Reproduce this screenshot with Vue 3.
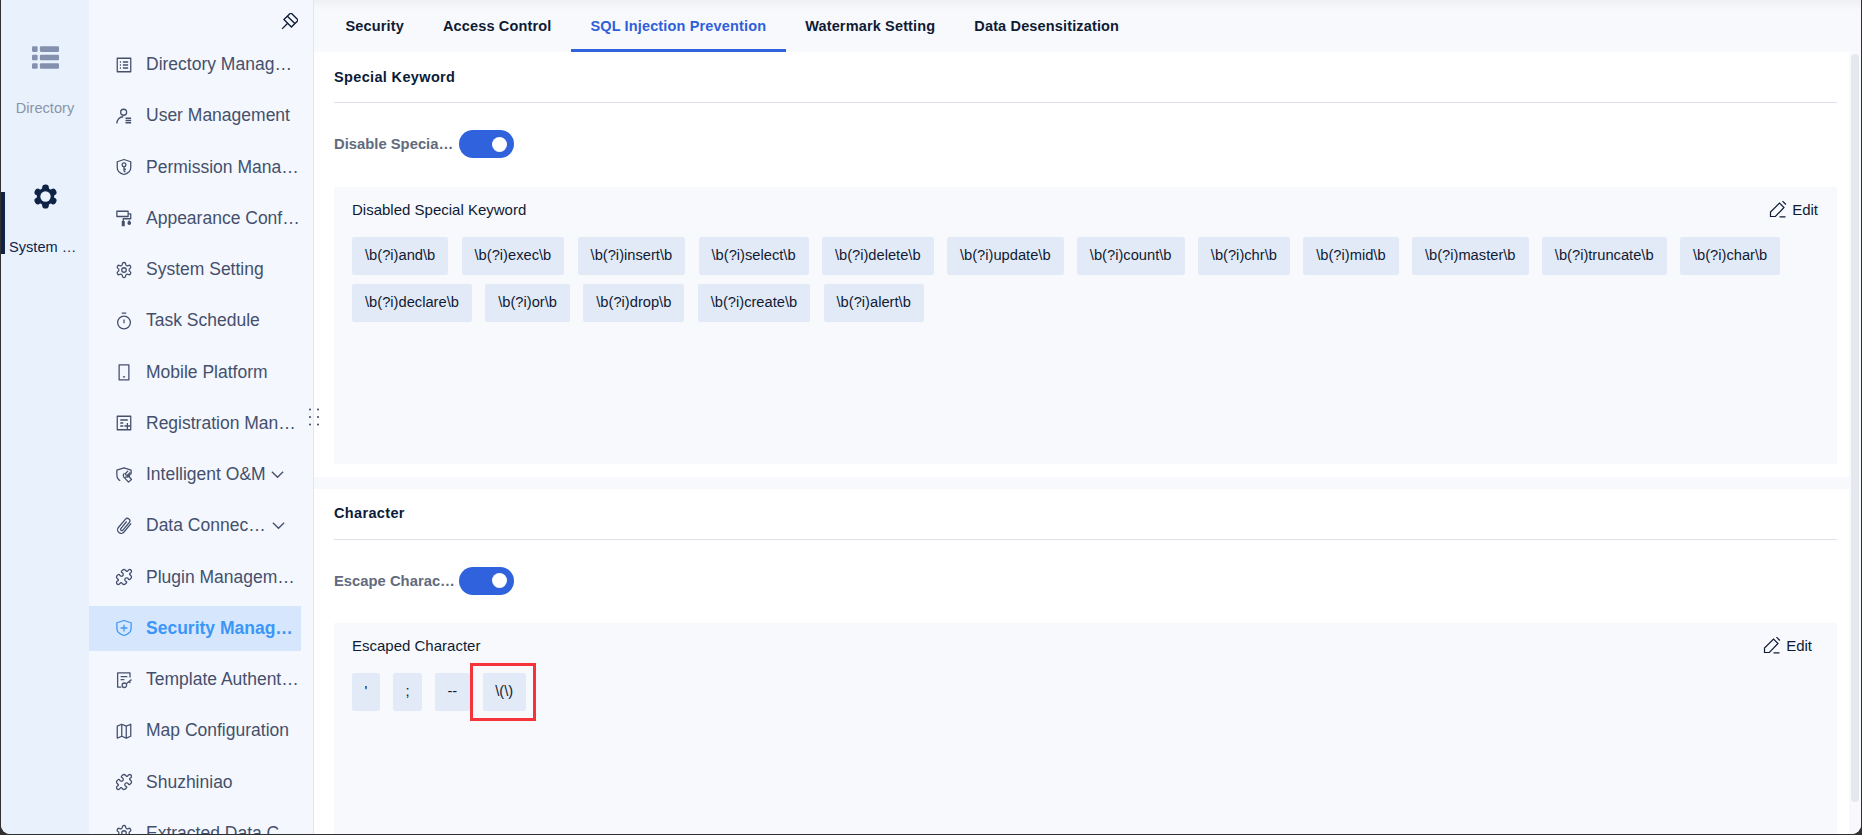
<script setup>
// Icons are stroke paths on a 24 box
const gear = "M12.22 2h-.44a2 2 0 0 0-2 2v.18a2 2 0 0 1-1 1.73l-.43.25a2 2 0 0 1-2 0l-.15-.08a2 2 0 0 0-2.73.73l-.22.38a2 2 0 0 0 .73 2.73l.15.1a2 2 0 0 1 1 1.72v.51a2 2 0 0 1-1 1.74l-.15.09a2 2 0 0 0-.73 2.73l.22.38a2 2 0 0 0 2.73.73l.15-.08a2 2 0 0 1 2 0l.43.25a2 2 0 0 1 1 1.73V20a2 2 0 0 0 2 2h.44a2 2 0 0 0 2-2v-.18a2 2 0 0 1 1-1.73l.43-.25a2 2 0 0 1 2 0l.15.08a2 2 0 0 0 2.73-.73l.22-.39a2 2 0 0 0-.73-2.73l-.15-.08a2 2 0 0 1-1-1.74v-.5a2 2 0 0 1 1-1.74l.15-.09a2 2 0 0 0 .73-2.73l-.22-.38a2 2 0 0 0-2.73-.73l-.15.08a2 2 0 0 1-2 0l-.43-.25a2 2 0 0 1-1-1.73V4a2 2 0 0 0-2-2z";
const ring = "M9 12a3 3 0 1 0 6 0a3 3 0 1 0-6 0";
const puzzle = "M19.44 7.85c-.05.32.06.65.29.88l1.57 1.57c.47.47.7 1.09.7 1.7s-.23 1.23-.7 1.7l-1.61 1.61a.98.98 0 0 1-.84.28c-.47-.07-.8-.48-.97-.93a2.5 2.5 0 1 0-3.21 3.22c.44.16.85.5.92.96a.98.98 0 0 1-.27.84l-1.61 1.61a2.4 2.4 0 0 1-3.41 0l-1.57-1.57a1.03 1.03 0 0 0-.87-.29c-.5.07-.84.5-1.02.97a2.5 2.5 0 1 1-3.24-3.24c.47-.18.9-.53.97-1.02a1.03 1.03 0 0 0-.29-.87l-1.57-1.57a2.4 2.4 0 0 1 0-3.41L4.23 8.77c.24-.24.58-.35.92-.3.51.07.87.53 1.07 1.01a2.5 2.5 0 1 0 3.26-3.26c-.48-.2-.93-.56-1.01-1.07-.05-.34.06-.68.3-.92l1.53-1.53a2.4 2.4 0 0 1 3.41 0l1.57 1.57c.23.23.55.34.87.29.5-.07.84-.5 1.02-.97a2.5 2.5 0 1 1 3.24 3.24c-.47.18-.9.53-.97 1.02z";

const menu = [
  { label: "Directory Management", paths: ["M3 3h18v18H3z", "M6.5 8h1.5M10.5 8h7M6.5 12h1.5M10.5 12h7M6.5 16h1.5M10.5 16h7"] },
  { label: "User Management", paths: ["M7.5 7a4 4 0 1 0 8 0a4 4 0 1 0-8 0", "M2.5 22c0-5 3.5-9 8.5-9", "M14 15h7.5M14 18h7.5M14 21h7.5"] },
  { label: "Permission Management", paths: ["M12 2l9 3v8c0 4.4-4 7.6-9 9c-5-1.4-9-4.6-9-9V5z", "M9.5 9a2.5 2.5 0 1 0 5 0a2.5 2.5 0 1 0-5 0", "M12 11.5v6.5M12 15h2.5M12 18h2"] },
  { label: "Appearance Configuration", paths: ["M2.5 3h15v7h-15z", "M17.5 6.5h3.5v6.5h-10v3"], fills: ["M9 16h4v7H9z", "M19 14.5c1.5 2 2.5 3 2.5 4.3a2.5 2.5 0 1 1-5 0c0-1.3 1-2.3 2.5-4.3z"] },
  { label: "System Setting", paths: [gear, ring] },
  { label: "Task Schedule", paths: ["M9 1.5h6", "M12 5.5a8.5 8.5 0 1 0 0 17a8.5 8.5 0 1 0 0-17z", "M12 10v5"] },
  { label: "Mobile Platform", paths: ["M5.5 2.5h13v20h-13z", "M10.5 18.5h3"] },
  { label: "Registration Management", paths: ["M3 3h18v18H3z", "M7 8h10M7 12h4M7 16h4", "M12.5 16h8M16.5 12v8"] },
  { label: "Intelligent O&M", arrow: true, paths: ["M7 19.5C4 18 2.5 15 2.5 11.5V5.5L12 2.5l9.5 3V11", "M17.5 6.5L14 10l.5 2 2 .5 3.5-3.5a4.5 4.5 0 0 1-5.5 5.5l-1 1", "M12.5 9.5a4.5 4.5 0 0 0-1 5l6.5 7 4-3.5-5.5-6.5"] },
  { label: "Data Connection", arrow: true, paths: ["M21.5 8.5L12 20a4.8 4.8 0 0 1-7.5-6L14 2.8a3.4 3.4 0 0 1 5.3 4.2L10.5 17.5a1.7 1.7 0 0 1-2.7-2.1L15.5 6"] },
  { label: "Plugin Management", paths: [puzzle] },
  { label: "Security Management", active: true, paths: ["M12 2l9.5 3v7.5c0 4.7-4.2 7.8-9.5 9.5c-5.3-1.7-9.5-4.8-9.5-9.5V5z", "M12 7.5v9M7.5 12h9"] },
  { label: "Template Authentication", paths: ["M20 8.5V2.5H3.5v19h5", "M7.5 7.5h9M7.5 11.5h5", "M9.5 19a3 3 0 1 0 6 0a3 3 0 1 0-6 0", "M15 17l7-5.5M19 14.5l1.5 1.5"] },
  { label: "Map Configuration", paths: ["M3 5.5L9 3l6 2.5L21 3v16l-6 2.5L9 19l-6 2.5z", "M9 3v16M15 5.5v16"] },
  { label: "Shuzhiniao", paths: [puzzle] },
  { label: "Extracted Data Configuration", paths: [gear, ring] },
];

const tabs = ["Security", "Access Control", "SQL Injection Prevention", "Watermark Setting", "Data Desensitization"];

const keywords = [
  "and", "exec", "insert", "select", "delete", "update", "count", "chr", "mid", "master",
  "truncate", "char", "declare", "or", "drop", "create", "alert",
].map((w) => `\\b(?i)${w}\\b`);

const escaped = ["'", ";", "--", "\\(\\)"];
</script>

<template>
  <div class="window">
    <div class="frame">
      <nav class="rail">
        <div class="rail-item">
          <svg class="rail-icon" viewBox="0 0 24 24" fill="#8391ae">
            <rect x="0" y="2" width="5" height="5" rx="1" />
            <rect x="7" y="2" width="17" height="5" rx="1" />
            <rect x="0" y="9.5" width="5" height="5" rx="1" />
            <rect x="7" y="9.5" width="17" height="5" rx="1" />
            <rect x="0" y="17" width="5" height="5" rx="1" />
            <rect x="7" y="17" width="17" height="5" rx="1" />
          </svg>
          <span class="rail-label">Directory</span>
        </div>
        <div class="rail-item rail-item--on">
          <svg class="rail-icon" viewBox="0 0 24 24">
            <path :d="gear" fill="#0f2347" stroke="#0f2347" stroke-width="1.5" />
            <circle cx="12" cy="12" r="4.6" fill="#e9f1fd" />
          </svg>
          <span class="rail-label">System Management</span>
        </div>
      </nav>

      <aside class="side">
        <div class="pin">
          <svg viewBox="0 0 24 24" fill="none" stroke="#0f1b33" stroke-width="1.8">
            <g transform="rotate(45 12 12)">
              <path d="M5 1.5h14v13H5z" />
              <path d="M5 8h14" />
              <path d="M12 14.5V25" />
            </g>
          </svg>
        </div>
        <div
          v-for="item in menu"
          :key="item.label"
          class="item"
          :class="{ 'item--on': item.active }"
        >
          <svg class="item-icon" viewBox="0 0 24 24" fill="none" stroke="currentColor" stroke-width="1.7" stroke-linejoin="round">
            <path v-for="d in item.paths" :key="d" :d="d" />
            <path v-for="d in item.fills" :key="d" :d="d" fill="currentColor" stroke="none" />
          </svg>
          <span class="item-text">{{ item.label }}</span>
          <svg v-if="item.arrow" class="item-arrow" viewBox="0 0 16 16" fill="none" stroke="currentColor" stroke-width="1.4">
            <path d="M2 5l6 6l6-6" />
          </svg>
        </div>
      </aside>

      <main class="main">
        <svg class="handle" viewBox="0 0 10 18" fill="#3a4560">
          <circle cx="1" cy="1.5" r="1" /><circle cx="9" cy="1.5" r="1" />
          <circle cx="1" cy="9" r="1" /><circle cx="9" cy="9" r="1" />
          <circle cx="1" cy="16.5" r="1" /><circle cx="9" cy="16.5" r="1" />
        </svg>

        <div class="tabs">
          <div
            v-for="tab in tabs"
            :key="tab"
            class="tab"
            :class="{ 'tab--on': tab === 'SQL Injection Prevention' }"
          >{{ tab }}</div>
        </div>

        <div class="body">
          <div class="sections">
            <section class="section section--first">
              <h3 class="section-title">Special Keyword</h3>
              <div class="switch-row">
                <span class="switch-label">Disable Special Keyword</span>
                <span class="switch"><i></i></span>
              </div>
              <div class="panel panel--first">
                <div class="panel-head">
                  <span>Disabled Special Keyword</span>
                  <span class="edit">
                    <svg viewBox="0 0 24 24" fill="none" stroke="#0f1b33" stroke-width="1.6">
                      <path d="M2 22v-6L14 4l6 6L8.5 22z" />
                      <path d="M18 1.5l4.5 4.5M14 22.5h8" />
                    </svg>
                    Edit
                  </span>
                </div>
                <div class="tags">
                  <span v-for="k in keywords" :key="k" class="tag">{{ k }}</span>
                </div>
              </div>
            </section>

            <section class="section section--second">
              <h3 class="section-title">Character</h3>
              <div class="switch-row switch-row--second">
                <span class="switch-label">Escape Character Setting</span>
                <span class="switch"><i></i></span>
              </div>
              <div class="panel panel--second">
                <div class="panel-head">
                  <span>Escaped Character</span>
                  <span class="edit">
                    <svg viewBox="0 0 24 24" fill="none" stroke="#0f1b33" stroke-width="1.6">
                      <path d="M2 22v-6L14 4l6 6L8.5 22z" />
                      <path d="M18 1.5l4.5 4.5M14 22.5h8" />
                    </svg>
                    Edit
                  </span>
                </div>
                <div class="tags">
                  <span
                    v-for="c in escaped"
                    :key="c"
                    class="tag"
                    :class="{ 'tag--marked': c === '\\(\\)' }"
                  >{{ c }}</span>
                </div>
              </div>
            </section>
          </div>
          <div class="scroll-track"><div class="scroll-thumb"></div></div>
        </div>
      </main>
    </div>
  </div>
</template>

<style>
html, body { margin: 0; background: #303030; }
</style>

<style scoped>
.window {
  width: 1862px;
  height: 835px;
  box-sizing: border-box;
  padding: 0 1px 1px 1px;
  background: #303030;
  font-family: "Liberation Sans", Arial, sans-serif;
  overflow: hidden;
}
.frame {
  height: 100%;
  display: flex;
  border-radius: 0 0 9px 9px;
  overflow: hidden;
  background: #f7f9fd;
}

/* left rail */
.rail {
  width: 88px;
  flex: none;
  background: #e9f1fd;
  padding-top: 44px;
  box-sizing: border-box;
}
.rail-item {
  position: relative;
  height: 139px;
  display: flex;
  flex-direction: column;
  align-items: center;
}
.rail-icon { width: 27px; height: 27px; display: block; }
.rail-label {
  margin-top: 27px;
  width: 72px;
  font-size: 14.6px;
  line-height: 20px;
  text-align: center;
  color: #8a94a8;
  white-space: nowrap;
  overflow: hidden;
  text-overflow: ellipsis;
}
.rail-item--on .rail-label { color: #0f2347; }
.rail-item--on::before {
  content: "";
  position: absolute;
  left: 0;
  top: 9px;
  width: 4px;
  height: 62px;
  background: #0f2347;
}

/* menu column */
.side {
  width: 225px;
  flex: none;
  background: #f4f7fe;
  border-right: 1px solid #e2e6f0;
  box-sizing: border-box;
  overflow: hidden;
  padding-top: 13px;
}
.pin { height: 29px; padding-left: 191px; box-sizing: border-box; }
.pin svg { width: 18px; height: 18px; display: block; }
.item {
  width: 212px;
  height: 45px;
  margin-bottom: 6.25px;
  box-sizing: border-box;
  padding-left: 26px;
  display: flex;
  align-items: center;
  color: #44506c;
  font-size: 17.5px;
}
.item-icon { width: 18px; height: 18px; flex: none; margin-right: 13px; }
.item-text {
  flex: 0 1 auto;
  min-width: 0;
  white-space: nowrap;
  overflow: hidden;
  text-overflow: ellipsis;
}
.item-arrow { width: 15px; height: 15px; flex: none; margin-left: 4px; margin-right: 15px; }
.item--on { background: #d6e6fd; color: #3a97f8; font-weight: 700; }

/* content */
.main {
  position: relative;
  flex: 1;
  min-width: 0;
  display: flex;
  flex-direction: column;
  background: linear-gradient(#eef0f4 0, #f7f9fd 10px);
}
.handle {
  position: absolute;
  left: -5px;
  top: 408px;
  width: 10px;
  height: 18px;
}
.tabs {
  height: 52px;
  flex: none;
  box-sizing: border-box;
  padding-left: 12px;
  display: flex;
}
.tab {
  padding: 0 19.5px;
  font-size: 14.5px;
  font-weight: 700;
  line-height: 52px;
  color: #0f1b33;
  letter-spacing: 0.15px;
  white-space: nowrap;
}
.tab--on { color: #2f5fd8; box-shadow: inset 0 -3px 0 #2f62dc; }

.body { flex: 1; min-height: 0; display: flex; }
.sections { flex: 1; min-width: 0; overflow: hidden; }
.section {
  background: #fff;
  padding: 0 12px 0 20px;
}
.section--first { height: 425px; margin-bottom: 12px; }
.section--second { height: 345px; overflow: hidden; }
.section-title {
  margin: 0;
  height: 50px;
  line-height: 50px;
  font-size: 14.5px;
  letter-spacing: 0.35px;
  color: #0b1b38;
  border-bottom: 1.5px solid #dfe1e8;
}
.section--second .section-title { line-height: 48px; }
.switch-row {
  height: 84px;
  padding-bottom: 2px;
  box-sizing: border-box;
  display: flex;
  align-items: center;
}
.switch-row--second { height: 83px; }
.switch-label {
  width: 123px;
  margin-right: 2px;
  font-size: 14.8px;
  font-weight: 700;
  color: #626b7e;
  white-space: nowrap;
  overflow: hidden;
  text-overflow: ellipsis;
}
.switch {
  width: 55px;
  height: 28px;
  border-radius: 14px;
  background: #2f62dc;
  display: flex;
  align-items: center;
  justify-content: flex-end;
  padding-right: 6px;
  box-sizing: border-box;
}
.switch i {
  width: 15px;
  height: 15px;
  border-radius: 50%;
  background: #fff;
  margin-right: 1px;
}
.panel {
  background: #f7f9fd;
  padding: 0 18px;
}
.panel--first { height: 277px; }
.panel--second { height: 300px; }
.panel-head {
  height: 50px;
  padding-bottom: 6px;
  box-sizing: border-box;
  display: flex;
  align-items: center;
  justify-content: space-between;
  font-size: 15px;
  color: #0f1b33;
}
.edit {
  display: flex;
  align-items: center;
  gap: 5px;
  margin-right: 1px;
}
.panel--second .edit { margin-right: 7px; }
.edit svg { width: 18px; height: 18px; }
.tags {
  display: flex;
  flex-wrap: wrap;
  gap: 9.5px 13.3px;
}
.tag {
  position: relative;
  height: 37.5px;
  line-height: 37.5px;
  padding: 0 13px;
  border-radius: 2px;
  background: #e3eaf7;
  font-size: 14.7px;
  color: #0f1b33;
  white-space: nowrap;
}
.panel--second .tags { column-gap: 12.8px; }
.panel--second .tag { padding: 0 12.6px; }
.tag--marked::after {
  content: "";
  position: absolute;
  inset: -10px -10px -10px -13px;
  border: 3px solid #f5343a;
}

.scroll-track { width: 12px; flex: none; padding: 2px 2px 0; box-sizing: border-box; }
.scroll-thumb {
  width: 8px;
  height: 748px;
  border-radius: 4px;
  background: #e6e8ef;
}
</style>
